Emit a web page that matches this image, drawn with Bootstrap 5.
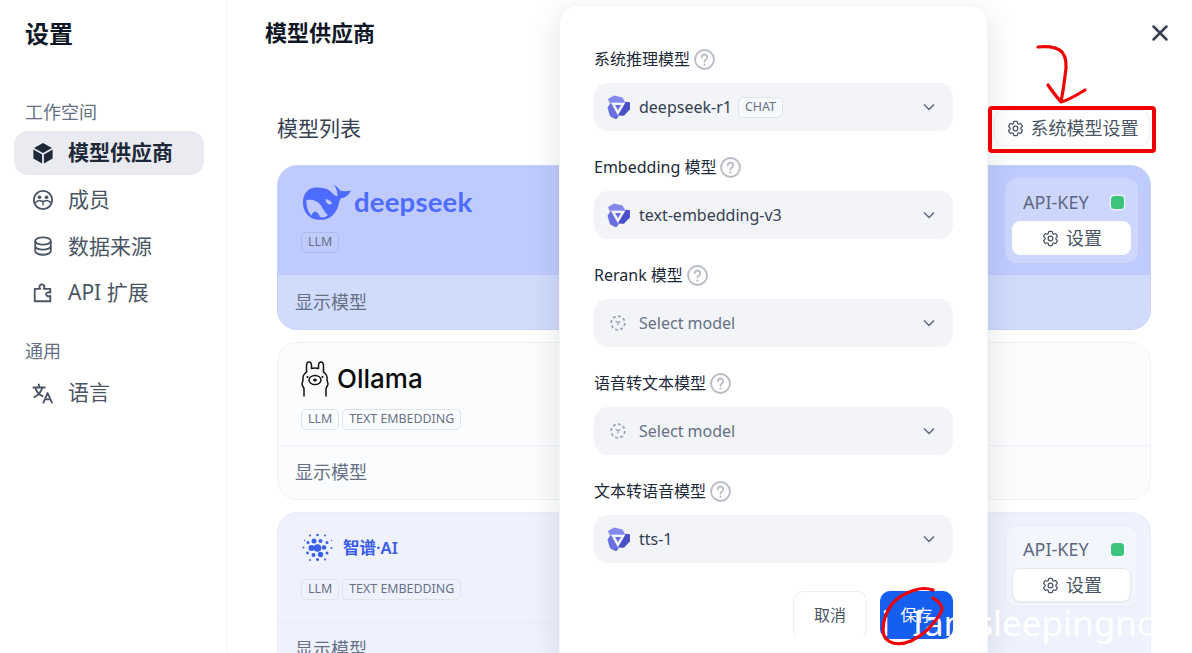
<!DOCTYPE html>
<html lang="zh-CN">

<head>
  <meta charset="UTF-8" />
  <meta name="viewport" content="width=device-width, initial-scale=1.0" />
  <title>设置</title>
  <link href="https://cdn.jsdelivr.net/npm/bootstrap@5.3.0/dist/css/bootstrap.min.css" rel="stylesheet" />
  <style>
    html, body { height: 653px; overflow: hidden; }
    body {
      font-family: "Noto Sans", "Noto Sans CJK SC", sans-serif;
      color: #354052;
      background: #fff;
      position: relative;
    }

    /* Sidebar */
    .side-pane { width: 228px; height: 653px; border-right: 1px solid #f2f4f7; padding: 0 23px 0 14px; flex: none; }
    .side-title { font-size: 24px; font-weight: 700; color: #101828; line-height: 32px; margin: 18px 0 49px 11px; }
    .side-head { font-size: 18px; line-height: 26px; color: #667085; margin-left: 11px; height: 32px; }
    .side-head.second { margin-top: 23px; height: 33px; }
    .side-item { height: 44px; margin-bottom: 2.7px; padding-left: 18px; border-radius: 14px; font-size: 21px; color: #495464; gap: 14px; }
    .side-item.active { background: #e9ebf0; color: #1d2939; font-weight: 700; }
    .side-item svg { width: 22px; height: 22px; flex: none; }

    /* Main column */
    .main-pane { height: 653px; overflow: hidden; padding: 17px 41px 0 37px; min-width: 0; }
    .main-title { font-size: 22px; font-weight: 700; color: #101828; line-height: 30px; margin-bottom: 58px; }
    .list-head { padding-left: 12px; height: 60px; }
    .list-title { font-size: 21px; color: #354052; line-height: 32px; margin-top: 7px; }
    .btn-sys { width: 156px; height: 36px; margin: 5px 1px 0 0; padding: 0; border: 1px solid #eef0f3; border-radius: 9px; background: #fff; font-size: 18px; color: #495464; gap: 6px; }
    .btn-sys svg, .btn-key svg { width: 19px; height: 19px; }

    .provider { margin-left: 12px; width: 874px; border-radius: 20px; margin-bottom: 12px; overflow: hidden; }
    .provider .card-body { padding: 12px 12px 0 23px; flex: none; }
    .provider .card-footer { padding: 0 17px; height: 54px; background: transparent; font-size: 18px; color: #667085; border-radius: 0; }
    .prov-blue { background: #d1dcfd; border: 1px solid #c6d2fb; }
    .prov-blue .card-body { height: 109px; background: #bfcbfd; }
    .prov-blue .card-footer { border-top: 0; }
    .prov-plain { background: #fbfcfd; border: 1px solid #f0f2f5; }
    .prov-plain .card-body { height: 102px; }
    .prov-plain .card-footer { border-top: 1px solid #eff1f4; }
    .prov-soft { background: #eff2fd; border: 1px solid #e9edfa; }
    .prov-soft .card-body { height: 109px; }
    .prov-soft .card-footer { border-top: 1px solid #e8ecf9; }

    .logo-row { height: 38px; margin-top: 5px; margin-bottom: 7px; gap: 3px; }
    .prov-soft .logo-row { margin-top: 4px; margin-bottom: 8px; }
    .word-deep { font-family: Lato, sans-serif; font-size: 27.5px; font-weight: 700; color: #4d6bfe; letter-spacing: .2px; line-height: 1; }
    .word-ollama { font-family: Inter, sans-serif; font-size: 26px; font-weight: 500; color: #0b0b0b; margin-left: 5px; line-height: 1; }
    .word-zhipu { font-size: 16.5px; font-weight: 600; color: #3b5ce8; margin-left: 5px; line-height: 1; }

    .model-tag { display: inline-flex; align-items: center; height: 21px; padding: 0 6px; margin-right: 3px; border: 1px solid #dfe3ea; border-radius: 5px; font-size: 12.4px; color: #667085; line-height: 1; }
    .prov-blue .model-tag { border-color: #acb9ec; }

    .key-box { width: 133px; height: 85px; padding: 8px 7px 0; border-radius: 12px; background: rgba(255, 255, 255, .22); }
    .prov-soft .key-box { height: 82px; background: rgba(255, 255, 255, .35); border: 1px solid #e9edfa; padding: 7px 6px 0; margin-left: -1px; }
    .key-line { height: 32px; padding: 0 7px 0 11px; font-size: 18px; color: #5c6780; }
    .key-dot { width: 13px; height: 13px; border-radius: 3.5px; background: #3cc47c; box-shadow: 0 0 0 1.5px rgba(255, 255, 255, .6); }
    .btn-key { width: 119px; height: 34px; padding: 0; margin-top: 3px; border: 1px solid #fff; border-radius: 8px; background: #fff; font-size: 18px; color: #495464; gap: 6px; }
    .prov-soft .btn-key { border-color: #e6e8ef; box-shadow: 0 1px 2px rgba(16, 24, 40, .06); }

    /* Close */
    .close-x { position: absolute; top: 24px; right: 23px; width: 18px; height: 18px; padding: 0; border: 0; background: none; line-height: 0; }

    /* System model dialog */
    .sys-panel { position: absolute; top: 5px; left: 559px; width: 429px; height: 648px; padding: 39px 34px 0; border-radius: 18px 18px 0 0; background: #fff; border: 1px solid #f3f4f6; box-shadow: 0 8px 32px rgba(16, 24, 40, .12); }
    .field-label { height: 28px; font-size: 16px; color: #1d2939; gap: 4px; margin-bottom: 10px; }
    .field-box { height: 48px; margin-bottom: 22px; padding: 0 16px 0 12px; border-radius: 14px; background: #f2f4f7; font-size: 16px; color: #354052; gap: 9px; }
    .field-box .muted-val { color: #667085; }
    .field-box .chev { margin-left: auto; width: 16px; height: 16px; }
    .field-box > svg:first-child { width: 24px; height: 24px; flex: none; }
    .field-box .model-tag { margin-left: -3px; background: #f7f8fa; }
    .help-ico { width: 21px; height: 21px; }
    .panel-foot { gap: 13px; margin-top: 28px; }
    .btn-off, .btn-save { height: 48px; padding: 0; border-radius: 10px; font-size: 16px; }
    .btn-off { width: 74px; background: #fff; border: 1px solid #eceef2; border-bottom-color: #fff; color: #495464; }
    .btn-save { width: 73px; background: #155eef; border: 1px solid #155eef; color: #fff; }

    /* Scribbles and watermark over the picture */
    .scribble { position: absolute; inset: 0; width: 1192px; height: 653px; pointer-events: none; }
    .water-text { position: absolute; left: 881px; top: 599px; font-size: 35px; line-height: 48px; color: #fff; white-space: nowrap; pointer-events: none; }
    .water-text span { margin-left: 22px; }
  </style>
</head>

<body>
  <svg width="0" height="0" class="position-absolute">
    <symbol id="gear" viewBox="0 0 24 24"><g fill="none" stroke="currentColor" stroke-width="1.6" stroke-linecap="round" stroke-linejoin="round"><path d="M9.594 3.94c.09-.542.56-.94 1.11-.94h2.593c.55 0 1.02.398 1.11.94l.213 1.281c.063.374.313.686.645.87.074.04.147.083.22.127.325.196.72.257 1.075.124l1.217-.456a1.125 1.125 0 0 1 1.37.49l1.296 2.247a1.125 1.125 0 0 1-.26 1.431l-1.003.827c-.293.241-.438.613-.43.992a7.723 7.723 0 0 1 0 .255c-.008.378.137.75.43.991l1.004.827c.424.35.534.955.26 1.43l-1.298 2.247a1.125 1.125 0 0 1-1.369.491l-1.217-.456c-.355-.133-.75-.072-1.076.124a6.47 6.47 0 0 1-.22.128c-.331.183-.581.495-.644.869l-.213 1.281c-.09.543-.56.94-1.11.94h-2.594c-.55 0-1.019-.398-1.11-.94l-.213-1.281c-.062-.374-.312-.686-.644-.87a6.52 6.52 0 0 1-.22-.127c-.325-.196-.72-.257-1.076-.124l-1.217.456a1.125 1.125 0 0 1-1.369-.49l-1.297-2.247a1.125 1.125 0 0 1 .26-1.431l1.004-.827c.292-.24.437-.613.43-.991a6.932 6.932 0 0 1 0-.255c.007-.38-.138-.751-.43-.992l-1.004-.827a1.125 1.125 0 0 1-.26-1.43l1.297-2.247a1.125 1.125 0 0 1 1.37-.491l1.216.456c.356.133.751.072 1.076-.124.072-.044.146-.086.22-.128.332-.183.582-.495.644-.869l.214-1.28Z"/><circle cx="12" cy="12" r="3"/></g></symbol>
    <symbol id="chev" viewBox="0 0 16 16"><path d="M3.5 6l4.5 4.5L12.500 6" fill="none" stroke="#667085" stroke-width="1.700" stroke-linecap="round" stroke-linejoin="round"/></symbol>
    <symbol id="help" viewBox="0 0 20 20"><circle cx="10" cy="10" r="9" fill="none" stroke="#b8bcc4" stroke-width="1.800"/><path d="M7.400 7.800a2.600 2.600 0 1 1 4 2.200c-.9.5-1.400 1-1.400 2" fill="none" stroke="#b8bcc4" stroke-width="1.800" stroke-linecap="round"/><circle cx="10" cy="14.800" r="1.100" fill="#b8bcc4"/></symbol>
    <symbol id="star" viewBox="0 0 24 24">
      <path d="M8 .5l8.500 2 3 5.500-16-.2-1.500-3.800z" fill="#8388ee"/>
      <path d="M8 .5l8.500 2 3 5.500-16-.2-1.500-3.800z" fill="#4a4ec9" transform="rotate(120 12 12)"/>
      <path d="M8 .5l8.500 2 3 5.500-16-.2-1.500-3.800z" fill="#6a6fe0" transform="rotate(240 12 12)"/>
      <path d="M5.500 7.800h13l-6.500 11z" fill="#f2f4f7"/>
      <path d="M9 10h6l-3 5.200z" fill="#6a6fe0"/>
    </symbol>
    <symbol id="blank" viewBox="0 0 24 24"><circle cx="12" cy="12" r="6.800" fill="none" stroke="#98a2b3" stroke-width="1.700" stroke-dasharray="3 2.300"/><path d="M10 10.500l2 1.200 2-1.200M12 11.700V14" fill="none" stroke="#98a2b3" stroke-width="1.200" stroke-linecap="round"/></symbol>
  </svg>

  <div class="d-flex">
    <aside class="side-pane">
      <div class="side-title">设置</div>
      <div class="side-head">工作空间</div>
      <div class="side-item active d-flex align-items-center">
        <svg viewBox="0 0 24 24" fill="#1d2939"><path d="M12 1l9.800 5.500L12 12 2.200 6.500z"/><path d="M1.500 8.300L11 13.700V23.500L1.500 18zM22.500 8.300V18L13 23.500v-9.800z"/></svg>
        <span>模型供应商</span>
      </div>
      <div class="side-item d-flex align-items-center">
        <svg viewBox="0 0 24 24" fill="none" stroke="#495464" stroke-width="2"><circle cx="12" cy="12" r="10"/><circle cx="8.200" cy="9" r="2" fill="#495464" stroke="none"/><circle cx="15.800" cy="9" r="2" fill="#495464" stroke="none"/><path d="M3 15c2-.5 3-2.500 5-2.500 1.500 0 2.500 1 4 1s2.500-1 4-1c2 0 3 2 5 2.500" stroke-width="1.800"/><path d="M12 14v4" stroke-width="1.500"/></svg>
        <span>成员</span>
      </div>
      <div class="side-item d-flex align-items-center">
        <svg viewBox="0 0 24 24" fill="none" stroke="#495464" stroke-width="2"><ellipse cx="12" cy="6.500" rx="8.500" ry="4"/><path d="M3.500 6.500v11c0 2.200 3.800 4 8.500 4s8.500-1.800 8.500-4v-11M3.500 12c0 2.200 3.800 4 8.500 4s8.500-1.800 8.500-4"/></svg>
        <span>数据来源</span>
      </div>
      <div class="side-item d-flex align-items-center">
        <svg viewBox="0 0 24 24" fill="none" stroke="#495464" stroke-width="2" stroke-linejoin="round"><path d="M3 7.500h5.800c-.8-1.100-.9-2.700-.3-3.700.8-1.300 2.800-1.500 4-.5 1 .9 1.100 2.800.4 4.200h7.100v4c-1.500-.6-4-.4-4.500 1.100-.5 1.500.9 3 2.400 3 .8 0 1.500-.1 2.100-.4v5.800H3z"/></svg>
        <span>API 扩展</span>
      </div>
      <div class="side-head second">通用</div>
      <div class="side-item d-flex align-items-center">
        <svg viewBox="0 0 24 24" fill="none" stroke="#495464" stroke-width="2" stroke-linecap="round" stroke-linejoin="round"><path d="M1.500 6h12.500M7.500 2.500V6M11.300 6C10 10.800 6.800 14.500 2.500 16.500M4 7.500c1.500 4 4.500 6.700 7.500 8"/><path d="M12.500 22.500l4.500-10.500 4.700 10.500M14 19h6"/></svg>
        <span>语言</span>
      </div>
    </aside>

    <main class="main-pane flex-grow-1">
      <div class="main-title">模型供应商</div>
      <div class="list-head d-flex justify-content-between align-items-start">
        <div class="list-title">模型列表</div>
        <button class="btn-sys btn d-flex align-items-center justify-content-center" type="button"><svg><use href="#gear" /></svg>系统模型设置</button>
      </div>

      <div class="card provider prov-blue">
        <div class="card-body d-flex justify-content-between">
          <div>
            <div class="logo-row d-flex align-items-center">
              <svg width="50" height="37" viewBox="0 0 50 37">
                <path d="M2 16C3 8 9 3.500 15 3.500 21 3.500 27 4 31 9 33 11 34.500 12 36 12.500 37 10 36 5 33 1 35.500 2 38 4.500 39 6.500 42 7.500 46 7.500 50 6.500 48.500 10 45 13.500 41 14 39 14.500 38.500 17 38 19 36.500 26 33 31 28 34 24 36 18 36.500 13 35 6 33 1 25 2 16Z" fill="#4d6bfe" />
                <path d="M5.500 16C11 15 17 17 20 21.500 22 25 24 29 27 31 24.500 33.500 21 34 19 33 18 30 16 27.500 14 27.500 12 28 11 30 10.500 31.500 7 28 5 22 5.500 16Z" fill="#bfcbfd" />
                <path d="M24.500 15C27 15.500 30 17 31 19 30 20.500 28.500 21 27 20 25.500 19 24.500 17 24.500 15Z" fill="#bfcbfd" />
              </svg>
              <span class="word-deep">deepseek</span>
            </div>
            <span class="model-tag">LLM</span>
          </div>
          <div class="key-box">
            <div class="key-line d-flex align-items-center justify-content-between"><span>API-KEY</span><span class="key-dot"></span></div>
            <button class="btn-key btn d-flex align-items-center justify-content-center" type="button"><svg><use href="#gear" /></svg>设置</button>
          </div>
        </div>
        <div class="card-footer d-flex align-items-center">显示模型</div>
      </div>

      <div class="card provider prov-plain">
        <div class="card-body d-flex justify-content-between">
          <div>
            <div class="logo-row d-flex align-items-center">
              <svg width="28" height="36" viewBox="0 0 28 36" fill="none" stroke="#111" stroke-width="1.500" stroke-linecap="round" stroke-linejoin="round">
                <path d="M5.500 11V5c0-2.500 1-4 2.500-4s2.500 1.500 2.500 4v2.500c2.300-.8 4.700-.8 7 0V5c0-2.500 1-4 2.500-4s2.500 1.500 2.500 4v6" />
                <path d="M5.500 11C3 13 1.500 15 2 18c.3 2-1 3-1 5 0 2 2 3 2 5v7M22.500 11c2.500 2 4 4 3.500 7-.3 2 1 3 1 5 0 2-2 3-2 5v7" />
                <ellipse cx="14" cy="19" rx="6" ry="4.600" />
                <ellipse cx="14" cy="19" rx="1.900" ry="1.500" fill="#111" stroke="none" />
                <circle cx="6.500" cy="16" r="1.100" fill="#111" stroke="none" />
                <circle cx="21.500" cy="16" r="1.100" fill="#111" stroke="none" />
              </svg>
              <span class="word-ollama">Ollama</span>
            </div>
            <span class="model-tag">LLM</span><span class="model-tag">TEXT EMBEDDING</span>
          </div>
        </div>
        <div class="card-footer d-flex align-items-center">显示模型</div>
      </div>

      <div class="card provider prov-soft">
        <div class="card-body d-flex justify-content-between">
          <div>
            <div class="logo-row d-flex align-items-center">
              <svg width="34" height="34" viewBox="0 0 34 34" fill="#3a5fe8">
                <circle cx="16.500" cy="17" r="3.800" /><circle cx="10.500" cy="17" r="3" /><circle cx="23" cy="16.500" r="2.300" /><circle cx="13" cy="10" r="2.500" /><circle cx="19.500" cy="10" r="2" /><circle cx="12.500" cy="24" r="2" /><circle cx="19.500" cy="23.500" r="2.700" /><circle cx="26" cy="11.500" r="1.500" /><circle cx="26" cy="22" r="1.500" /><circle cx="7" cy="11.500" r="1.500" /><circle cx="6.500" cy="22" r="1.400" /><circle cx="16.500" cy="4" r="1.300" /><circle cx="16.500" cy="28.500" r="1.500" /><circle cx="9" cy="4.500" r="1" /><circle cx="24" cy="4.500" r="1" /><circle cx="9" cy="29" r="1" /><circle cx="24" cy="28.500" r="1" /><circle cx="30.500" cy="17" r="1" /><circle cx="2.500" cy="16.500" r="1" /><circle cx="30.500" cy="9.500" r=".7" /><circle cx="3.500" cy="9.500" r=".7" />
              </svg>
              <span class="word-zhipu">智谱·AI</span>
            </div>
            <span class="model-tag">LLM</span><span class="model-tag">TEXT EMBEDDING</span>
          </div>
          <div class="key-box">
            <div class="key-line d-flex align-items-center justify-content-between"><span>API-KEY</span><span class="key-dot"></span></div>
            <button class="btn-key btn d-flex align-items-center justify-content-center" type="button"><svg><use href="#gear" /></svg>设置</button>
          </div>
        </div>
        <div class="card-footer d-flex align-items-center">显示模型</div>
      </div>
    </main>
  </div>

  <button class="close-x" type="button" aria-label="关闭"><svg width="18" height="18" viewBox="0 0 18 18"><path d="M2.500 2.500l13 13M15.500 2.500l-13 13" stroke="#354052" stroke-width="2.500" stroke-linecap="round" /></svg></button>

  <!-- dialog opened from the system model button -->
  <div class="sys-panel">
    <div class="field-label d-flex align-items-center">系统推理模型 <svg class="help-ico"><use href="#help" /></svg></div>
    <div class="field-box d-flex align-items-center"><svg><use href="#star" /></svg><span>deepseek-r1</span><span class="model-tag">CHAT</span><svg class="chev"><use href="#chev" /></svg></div>
    <div class="field-label d-flex align-items-center">Embedding 模型 <svg class="help-ico"><use href="#help" /></svg></div>
    <div class="field-box d-flex align-items-center"><svg><use href="#star" /></svg><span>text-embedding-v3</span><svg class="chev"><use href="#chev" /></svg></div>
    <div class="field-label d-flex align-items-center">Rerank 模型 <svg class="help-ico"><use href="#help" /></svg></div>
    <div class="field-box d-flex align-items-center"><svg><use href="#blank" /></svg><span class="muted-val">Select model</span><svg class="chev"><use href="#chev" /></svg></div>
    <div class="field-label d-flex align-items-center">语音转文本模型 <svg class="help-ico"><use href="#help" /></svg></div>
    <div class="field-box d-flex align-items-center"><svg><use href="#blank" /></svg><span class="muted-val">Select model</span><svg class="chev"><use href="#chev" /></svg></div>
    <div class="field-label d-flex align-items-center">文本转语音模型 <svg class="help-ico"><use href="#help" /></svg></div>
    <div class="field-box d-flex align-items-center"><svg><use href="#star" /></svg><span>tts-1</span><svg class="chev"><use href="#chev" /></svg></div>
    <div class="panel-foot d-flex justify-content-end">
      <button class="btn-off btn" type="button">取消</button>
      <button class="btn-save btn" type="button">保存</button>
    </div>
  </div>

  <div class="water-text">i<span>Iamsleepingno</span></div>

  <svg class="scribble" viewBox="0 0 1192 653" fill="none" stroke="#f00000" stroke-linecap="round" stroke-linejoin="round">
    <rect x="990" y="108" width="164" height="43" rx="2" stroke-width="4" />
    <path d="M1038 47c10-1 19 0 24 5 5 6 5 14 3 24-1 8-2 17-4 25" stroke-width="3.200" />
    <path d="M1048 85c4 6 8 11 13 17 8-2 16-7 24-12" stroke-width="3.200" />
    <path d="M933 590c-6-2-12-2-18 0-10 3-18 8-23 14-6 8-9 18-9 26 0 6 3 11 10 13 7 2 13 0 18-2 8-4 15-9 20-15 6-7 11-13 11-17 0-4-4-8-9-11" stroke-width="3.200" />
  </svg>

  <script src="https://cdn.jsdelivr.net/npm/bootstrap@5.3.0/dist/js/bootstrap.bundle.min.js"></script>
</body>

</html>
